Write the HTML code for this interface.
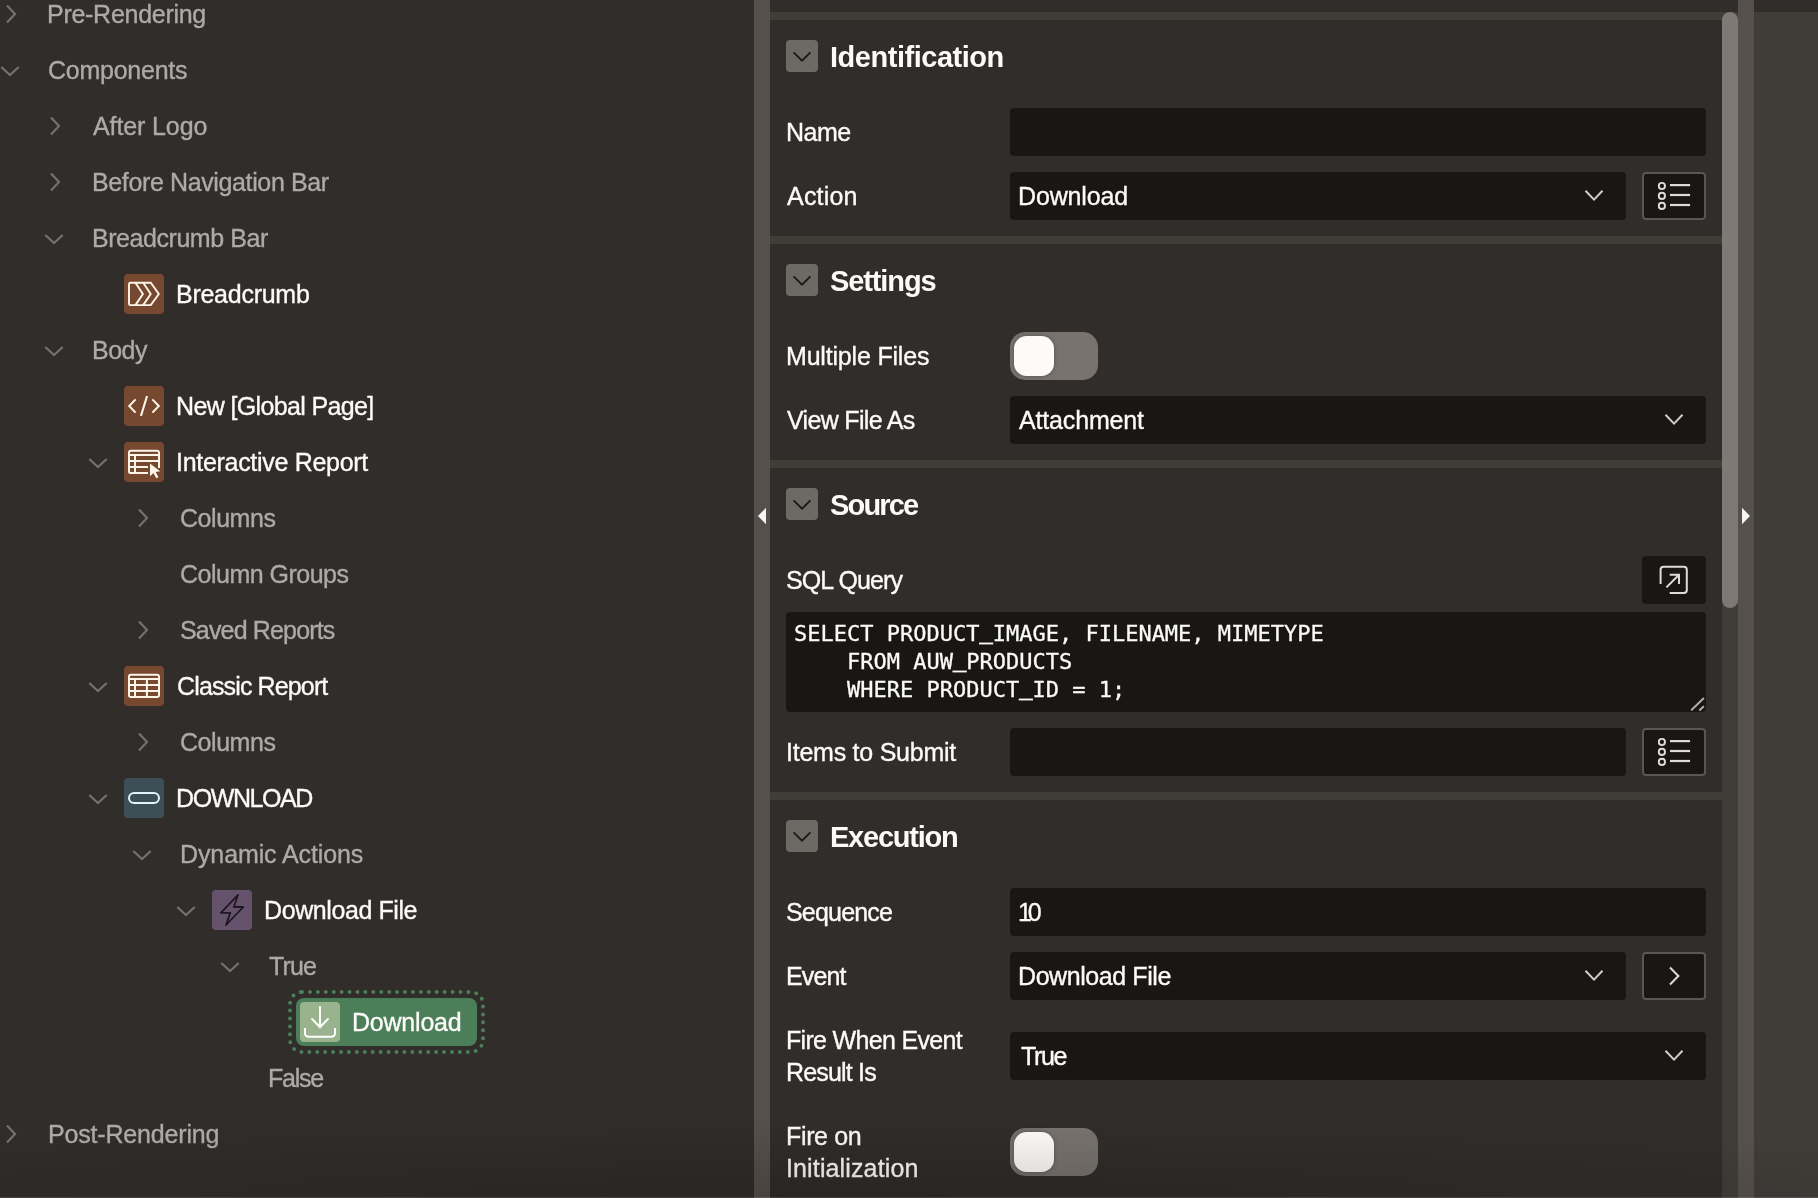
<!DOCTYPE html>
<html lang="en"><head><meta charset="utf-8"><title>Page Designer</title>
<style>
html,body{margin:0;padding:0;background:#312d2a;}
body{width:1818px;height:1198px;overflow:hidden;position:relative;font-family:"Liberation Sans",sans-serif;}
.abs{position:absolute;}
span.abs,pre.abs{will-change:transform;}
.t{font-size:25px;line-height:32px;white-space:nowrap;-webkit-text-stroke:0.35px currentColor;}
.h{font-size:29px;line-height:40px;font-weight:bold;color:#fcfbfa;white-space:nowrap;}
.u{position:relative;top:-1.6px;-webkit-text-stroke:0.9px currentColor;}
.m{margin:0;font-family:"DejaVu Sans Mono","Liberation Mono",monospace;font-size:22px;line-height:28px;color:#fcfbfa;-webkit-text-stroke:0.3px currentColor;}
</style></head><body>
<div class="abs" style="left:0;top:0;width:754px;height:1198px;background:#312d2a"></div>
<svg class="abs" style="left:-0.85px;top:1.85px" width="24" height="24" viewBox="0 0 24 24"><path d="M8 3.5 L16 12 L8 20.5" fill="none" stroke="#75716d" stroke-width="2.2"/></svg>
<span id="tree0" class="abs t" style="left:47px;top:-2px;color:#adaaa7;letter-spacing:-0.279px">Pre-Rendering</span>
<svg class="abs" style="left:-2.5px;top:58.9px" width="24" height="24" viewBox="0 0 24 24"><path d="M3.3 8 L12 16 L20.7 8" fill="none" stroke="#75716d" stroke-width="2.2"/></svg>
<span id="tree1" class="abs t" style="left:48px;top:54px;color:#adaaa7;letter-spacing:-0.244px">Components</span>
<svg class="abs" style="left:43.15px;top:113.85px" width="24" height="24" viewBox="0 0 24 24"><path d="M8 3.5 L16 12 L8 20.5" fill="none" stroke="#75716d" stroke-width="2.2"/></svg>
<span id="tree2" class="abs t" style="left:93px;top:110px;color:#adaaa7;letter-spacing:-0.112px">After Logo</span>
<svg class="abs" style="left:43.15px;top:169.85px" width="24" height="24" viewBox="0 0 24 24"><path d="M8 3.5 L16 12 L8 20.5" fill="none" stroke="#75716d" stroke-width="2.2"/></svg>
<span id="tree3" class="abs t" style="left:92px;top:166px;color:#adaaa7;letter-spacing:-0.371px">Before Navigation Bar</span>
<svg class="abs" style="left:41.5px;top:226.9px" width="24" height="24" viewBox="0 0 24 24"><path d="M3.3 8 L12 16 L20.7 8" fill="none" stroke="#75716d" stroke-width="2.2"/></svg>
<span id="tree4" class="abs t" style="left:92px;top:222px;color:#adaaa7;letter-spacing:-0.446px">Breadcrumb Bar</span>
<svg class="abs" style="left:124px;top:274px" width="40" height="40" viewBox="0 0 40 40"><rect width="40" height="40" rx="4" fill="#764830"/><path d="M6.5 8.75 H26.8 L34.8 20 L26.8 31.15 H6.5 a1.5 1.5 0 0 1 -1.5 -1.5 V10.25 a1.5 1.5 0 0 1 1.5 -1.5 Z M11.4 8.75 L18.9 20 L11.4 31.15 M19.2 8.75 L26.7 20 L19.2 31.15" fill="none" stroke="#fdf6e8" stroke-width="1.9" stroke-linejoin="miter"/></svg>
<span id="tree5" class="abs t" style="left:176px;top:278px;color:#fcfbfa;letter-spacing:-0.26px">Breadcrumb</span>
<svg class="abs" style="left:41.5px;top:338.9px" width="24" height="24" viewBox="0 0 24 24"><path d="M3.3 8 L12 16 L20.7 8" fill="none" stroke="#75716d" stroke-width="2.2"/></svg>
<span id="tree6" class="abs t" style="left:92px;top:334px;color:#adaaa7;letter-spacing:-0.523px">Body</span>
<svg class="abs" style="left:124px;top:386px" width="40" height="40" viewBox="0 0 40 40"><rect width="40" height="40" rx="4" fill="#764830"/><path d="M11.6 13.4 L5.2 20 L11.6 26.6 M28.4 13.4 L34.8 20 L28.4 26.6" fill="none" stroke="#fdf6e8" stroke-width="2"/><path d="M23.05 10 L16.95 30" fill="none" stroke="#fdf6e8" stroke-width="2.1"/></svg>
<span id="tree7" class="abs t" style="left:176px;top:390px;color:#fcfbfa;letter-spacing:-0.633px">New [Global Page]</span>
<svg class="abs" style="left:85.5px;top:450.9px" width="24" height="24" viewBox="0 0 24 24"><path d="M3.3 8 L12 16 L20.7 8" fill="none" stroke="#75716d" stroke-width="2.2"/></svg>
<svg class="abs" style="left:124px;top:442px" width="40" height="40" viewBox="0 0 40 40"><rect width="40" height="40" rx="4" fill="#764830"/><path d="M24 31.1 H6.8 a1.8 1.8 0 0 1 -1.8 -1.8 V10.55 a1.8 1.8 0 0 1 1.8 -1.8 H33.2 a1.8 1.8 0 0 1 1.8 1.8 V26 M5 13 H35 M5 18.9 H35 M5 25 H24 M11 13 V31.1" fill="none" stroke="#fdf6e8" stroke-width="2"/><path d="M26 21.6 L26 34.2 L29.4 30.9 L32.3 36.3 L34.5 35.2 L31.7 30 L36.2 29.2 Z" fill="#fdf6e8"/></svg>
<span id="tree8" class="abs t" style="left:176px;top:446px;color:#fcfbfa;letter-spacing:-0.298px">Interactive Report</span>
<svg class="abs" style="left:131.15px;top:505.85px" width="24" height="24" viewBox="0 0 24 24"><path d="M8 3.5 L16 12 L8 20.5" fill="none" stroke="#75716d" stroke-width="2.2"/></svg>
<span id="tree9" class="abs t" style="left:180px;top:502px;color:#adaaa7;letter-spacing:-0.456px">Columns</span>
<span id="tree10" class="abs t" style="left:180px;top:558px;color:#adaaa7;letter-spacing:-0.507px">Column Groups</span>
<svg class="abs" style="left:131.15px;top:617.85px" width="24" height="24" viewBox="0 0 24 24"><path d="M8 3.5 L16 12 L8 20.5" fill="none" stroke="#75716d" stroke-width="2.2"/></svg>
<span id="tree11" class="abs t" style="left:180px;top:614px;color:#adaaa7;letter-spacing:-0.838px">Saved Reports</span>
<svg class="abs" style="left:85.5px;top:674.9px" width="24" height="24" viewBox="0 0 24 24"><path d="M3.3 8 L12 16 L20.7 8" fill="none" stroke="#75716d" stroke-width="2.2"/></svg>
<svg class="abs" style="left:124px;top:666px" width="40" height="40" viewBox="0 0 40 40"><rect width="40" height="40" rx="4" fill="#764830"/><path d="M6.8 8.75 H33.2 a1.8 1.8 0 0 1 1.8 1.8 V29.3 a1.8 1.8 0 0 1 -1.8 1.8 H6.8 a1.8 1.8 0 0 1 -1.8 -1.8 V10.55 a1.8 1.8 0 0 1 1.8 -1.8 Z M5 13 H35 M5 18.9 H35 M5 25 H35 M11 13 V31.1 M22.9 13 V31.1" fill="none" stroke="#fdf6e8" stroke-width="2"/></svg>
<span id="tree12" class="abs t" style="left:177px;top:670px;color:#fcfbfa;letter-spacing:-0.865px">Classic Report</span>
<svg class="abs" style="left:131.15px;top:729.85px" width="24" height="24" viewBox="0 0 24 24"><path d="M8 3.5 L16 12 L8 20.5" fill="none" stroke="#75716d" stroke-width="2.2"/></svg>
<span id="tree13" class="abs t" style="left:180px;top:726px;color:#adaaa7;letter-spacing:-0.456px">Columns</span>
<svg class="abs" style="left:85.5px;top:786.9px" width="24" height="24" viewBox="0 0 24 24"><path d="M3.3 8 L12 16 L20.7 8" fill="none" stroke="#75716d" stroke-width="2.2"/></svg>
<svg class="abs" style="left:124px;top:778px" width="40" height="40" viewBox="0 0 40 40"><rect width="40" height="40" rx="4" fill="#3c4f56"/><rect x="5" y="14.9" width="30" height="10.2" rx="5.1" fill="none" stroke="#e4f3fa" stroke-width="2"/></svg>
<span id="tree14" class="abs t" style="left:176px;top:782px;color:#fcfbfa;letter-spacing:-1.404px">DOWNLOAD</span>
<svg class="abs" style="left:129.5px;top:842.9px" width="24" height="24" viewBox="0 0 24 24"><path d="M3.3 8 L12 16 L20.7 8" fill="none" stroke="#75716d" stroke-width="2.2"/></svg>
<span id="tree15" class="abs t" style="left:180px;top:838px;color:#adaaa7;letter-spacing:-0.103px">Dynamic Actions</span>
<svg class="abs" style="left:173.5px;top:898.9px" width="24" height="24" viewBox="0 0 24 24"><path d="M3.3 8 L12 16 L20.7 8" fill="none" stroke="#75716d" stroke-width="2.2"/></svg>
<svg class="abs" style="left:212px;top:890px" width="40" height="40" viewBox="0 0 40 40"><rect width="40" height="40" rx="4" fill="#65526d"/><path d="M26 4.8 L8.8 22.8 H18.3 L14 35 L31.3 17 H21.8 Z" fill="none" stroke="#1d181f" stroke-width="1.8" stroke-linejoin="round"/></svg>
<span id="tree16" class="abs t" style="left:264px;top:894px;color:#fcfbfa;letter-spacing:-0.407px">Download File</span>
<svg class="abs" style="left:217.5px;top:954.9px" width="24" height="24" viewBox="0 0 24 24"><path d="M3.3 8 L12 16 L20.7 8" fill="none" stroke="#75716d" stroke-width="2.2"/></svg>
<span id="tree17" class="abs t" style="left:269px;top:950px;color:#adaaa7;letter-spacing:-0.861px">True</span>
<div class="abs" style="left:288px;top:990px;width:189px;height:56px;border:4px dotted #4b7e59;border-radius:14px;"></div>
<div class="abs" style="left:296px;top:998px;width:181px;height:48px;background:#4b7e59;border-radius:8px;"></div>
<svg class="abs" style="left:300px;top:1002px" width="40" height="40" viewBox="0 0 40 40"><rect width="40" height="40" rx="4" fill="#98b38d"/><path d="M20 4.3 V25 M11.5 16.4 L20 25.2 L28.5 16.4" fill="none" stroke="#ffffff" stroke-width="2"/><path d="M5 26 V31.3 a3.5 3.5 0 0 0 3.5 3.5 H31.5 a3.5 3.5 0 0 0 3.5 -3.5 V26" fill="none" stroke="#ffffff" stroke-width="2"/></svg>
<span id="tree18" class="abs t" style="left:352px;top:1006px;color:#fcfbfa;letter-spacing:-0.217px">Download</span>
<span id="tree19" class="abs t" style="left:268px;top:1062px;color:#adaaa7;letter-spacing:-1.258px">False</span>
<svg class="abs" style="left:-0.85px;top:1121.85px" width="24" height="24" viewBox="0 0 24 24"><path d="M8 3.5 L16 12 L8 20.5" fill="none" stroke="#75716d" stroke-width="2.2"/></svg>
<span id="tree20" class="abs t" style="left:48px;top:1118px;color:#adaaa7;letter-spacing:-0.172px">Post-Rendering</span>
<div class="abs" style="left:754px;top:0;width:16px;height:1198px;background:#56504c"></div>
<svg class="abs" style="left:754px;top:504px" width="16" height="24" viewBox="0 0 16 24"><path d="M12 3.8 L4 12 L12 20.2 Z" fill="#f7f5f3"/></svg>
<div class="abs" style="left:770px;top:0;width:952px;height:1198px;background:#312d2a"></div>
<div class="abs" style="left:770px;top:12px;width:952px;height:8px;background:#403c38"></div>
<div class="abs" style="left:786px;top:40px;width:32px;height:32px;border-radius:4px;background:#6d6964"></div>
<svg class="abs" style="left:786px;top:40px" width="32" height="32" viewBox="0 0 32 32"><path d="M7.6 12.4 L16 20.7 L24.4 12.4" fill="none" stroke="#1c1a18" stroke-width="1.9"/></svg>
<span id="h0" class="abs h" style="left:830px;top:37px;letter-spacing:-0.472px">Identification</span>
<span id="l0" class="abs t" style="left:786px;top:116px;color:#fcfbfa;letter-spacing:-0.481px">Name</span>
<div class="abs" style="left:1010px;top:108px;width:696px;height:48px;background:#191715;border-radius:4px"></div>
<span id="l1" class="abs t" style="left:787px;top:180px;color:#fcfbfa;letter-spacing:0.204px">Action</span>
<div class="abs" style="left:1010px;top:172px;width:616px;height:48px;background:#191715;border-radius:4px"></div>
<span id="v1" class="abs t" style="left:1018px;top:180px;color:#fcfbfa;letter-spacing:-0.144px">Download</span>
<svg class="abs" style="left:1582px;top:184px" width="24" height="24" viewBox="0 0 24 24"><path d="M3.5 6.8 L12 15.6 L20.5 6.8" fill="none" stroke="#d2cfcc" stroke-width="2"/></svg>
<div class="abs" style="left:1642px;top:172px;width:64px;height:48px;background:#191715;border-radius:4px;box-sizing:border-box;border:2px solid #5a5652;"></div>
<svg class="abs" style="left:1642px;top:172px" width="64" height="48" viewBox="0 0 64 48"><circle cx="19.9" cy="14" r="3.1" fill="none" stroke="#dedbd8" stroke-width="1.9"/><path d="M28 13.1 H48.1" stroke="#dedbd8" stroke-width="2.2"/><circle cx="19.9" cy="23.9" r="3.1" fill="none" stroke="#dedbd8" stroke-width="1.9"/><path d="M28 23.0 H48.1" stroke="#dedbd8" stroke-width="2.2"/><circle cx="19.9" cy="33.9" r="3.1" fill="none" stroke="#dedbd8" stroke-width="1.9"/><path d="M28 33.0 H48.1" stroke="#dedbd8" stroke-width="2.2"/></svg>
<div class="abs" style="left:770px;top:236px;width:952px;height:8px;background:#403c38"></div>
<div class="abs" style="left:786px;top:264px;width:32px;height:32px;border-radius:4px;background:#6d6964"></div>
<svg class="abs" style="left:786px;top:264px" width="32" height="32" viewBox="0 0 32 32"><path d="M7.6 12.4 L16 20.7 L24.4 12.4" fill="none" stroke="#1c1a18" stroke-width="1.9"/></svg>
<span id="h1" class="abs h" style="left:830px;top:261px;letter-spacing:-1.103px">Settings</span>
<span id="l2" class="abs t" style="left:786px;top:340px;color:#fcfbfa;letter-spacing:-0.19px">Multiple Files</span>
<div class="abs" style="left:1010px;top:332px;width:88px;height:48px;background:#78736f;border-radius:15px"></div>
<div class="abs" style="left:1014px;top:336px;width:40px;height:40px;background:#fcfbfa;border-radius:12.5px;box-shadow:0 0 5px rgba(0,0,0,0.28)"></div>
<span id="l3" class="abs t" style="left:787px;top:404px;color:#fcfbfa;letter-spacing:-0.671px">View File As</span>
<div class="abs" style="left:1010px;top:396px;width:696px;height:48px;background:#191715;border-radius:4px"></div>
<span id="v3" class="abs t" style="left:1019px;top:404px;color:#fcfbfa;letter-spacing:-0.159px">Attachment</span>
<svg class="abs" style="left:1662px;top:408px" width="24" height="24" viewBox="0 0 24 24"><path d="M3.5 6.8 L12 15.6 L20.5 6.8" fill="none" stroke="#d2cfcc" stroke-width="2"/></svg>
<div class="abs" style="left:770px;top:460px;width:952px;height:8px;background:#403c38"></div>
<div class="abs" style="left:786px;top:488px;width:32px;height:32px;border-radius:4px;background:#6d6964"></div>
<svg class="abs" style="left:786px;top:488px" width="32" height="32" viewBox="0 0 32 32"><path d="M7.6 12.4 L16 20.7 L24.4 12.4" fill="none" stroke="#1c1a18" stroke-width="1.9"/></svg>
<span id="h2" class="abs h" style="left:830px;top:485px;letter-spacing:-1.833px">Source</span>
<span id="l4" class="abs t" style="left:786px;top:564px;color:#fcfbfa;letter-spacing:-0.891px">SQL Query</span>
<div class="abs" style="left:1642px;top:556px;width:64px;height:48px;background:#191715;border-radius:4px;box-sizing:border-box;"></div>
<svg class="abs" style="left:1642px;top:556px" width="64" height="48" viewBox="0 0 64 48"><path d="M18.6 28 V13.8 a3 3 0 0 1 3 -3 H41.8 a3 3 0 0 1 3 3 V34.1 a3 3 0 0 1 -3 3 H27.7" fill="none" stroke="#dedbd8" stroke-width="2"/><path d="M24.4 31.4 L37 18.8 M27.7 18.8 H37 V28" fill="none" stroke="#dedbd8" stroke-width="2"/></svg>
<div class="abs" style="left:786px;top:612px;width:920px;height:100px;background:#191715;border-radius:4px"></div>
<pre class="abs m" style="left:794px;top:620px;">SELECT PRODUCT<span class="u">_</span>IMAGE, FILENAME, MIMETYPE
    FROM AUW<span class="u">_</span>PRODUCTS
    WHERE PRODUCT<span class="u">_</span>ID = 1;</pre>
<svg class="abs" style="left:1686px;top:692px" width="20" height="20" viewBox="0 0 20 20"><path d="M5.2 18.3 L17.9 6 M13.3 18.5 L17.9 14.2" stroke="#b3b0ad" stroke-width="1.9" fill="none"/></svg>
<span id="l5" class="abs t" style="left:786px;top:736px;color:#fcfbfa;letter-spacing:-0.243px">Items to Submit</span>
<div class="abs" style="left:1010px;top:728px;width:616px;height:48px;background:#191715;border-radius:4px"></div>
<div class="abs" style="left:1642px;top:728px;width:64px;height:48px;background:#191715;border-radius:4px;box-sizing:border-box;border:2px solid #5a5652;"></div>
<svg class="abs" style="left:1642px;top:728px" width="64" height="48" viewBox="0 0 64 48"><circle cx="19.9" cy="14" r="3.1" fill="none" stroke="#dedbd8" stroke-width="1.9"/><path d="M28 13.1 H48.1" stroke="#dedbd8" stroke-width="2.2"/><circle cx="19.9" cy="23.9" r="3.1" fill="none" stroke="#dedbd8" stroke-width="1.9"/><path d="M28 23.0 H48.1" stroke="#dedbd8" stroke-width="2.2"/><circle cx="19.9" cy="33.9" r="3.1" fill="none" stroke="#dedbd8" stroke-width="1.9"/><path d="M28 33.0 H48.1" stroke="#dedbd8" stroke-width="2.2"/></svg>
<div class="abs" style="left:770px;top:792px;width:952px;height:8px;background:#403c38"></div>
<div class="abs" style="left:786px;top:820px;width:32px;height:32px;border-radius:4px;background:#6d6964"></div>
<svg class="abs" style="left:786px;top:820px" width="32" height="32" viewBox="0 0 32 32"><path d="M7.6 12.4 L16 20.7 L24.4 12.4" fill="none" stroke="#1c1a18" stroke-width="1.9"/></svg>
<span id="h3" class="abs h" style="left:830px;top:817px;letter-spacing:-1.236px">Execution</span>
<span id="l6" class="abs t" style="left:786px;top:896px;color:#fcfbfa;letter-spacing:-0.807px">Sequence</span>
<div class="abs" style="left:1010px;top:888px;width:696px;height:48px;background:#191715;border-radius:4px"></div>
<span id="v6" class="abs t" style="left:1018px;top:896px;color:#fcfbfa;letter-spacing:-4.079px">10</span>
<span id="l7" class="abs t" style="left:786px;top:960px;color:#fcfbfa;letter-spacing:-0.864px">Event</span>
<div class="abs" style="left:1010px;top:952px;width:616px;height:48px;background:#191715;border-radius:4px"></div>
<span id="v7" class="abs t" style="left:1018px;top:960px;color:#fcfbfa;letter-spacing:-0.423px">Download File</span>
<svg class="abs" style="left:1582px;top:964px" width="24" height="24" viewBox="0 0 24 24"><path d="M3.5 6.8 L12 15.6 L20.5 6.8" fill="none" stroke="#d2cfcc" stroke-width="2"/></svg>
<div class="abs" style="left:1642px;top:952px;width:64px;height:48px;background:#191715;border-radius:4px;box-sizing:border-box;border:2px solid #5a5652;"></div>
<svg class="abs" style="left:1642px;top:952px" width="64" height="48" viewBox="0 0 64 48"><path d="M28 15.5 L36.4 24 L28 32.5" fill="none" stroke="#dedbd8" stroke-width="2"/></svg>
<span id="l8" class="abs t" style="left:786px;top:1024px;color:#fcfbfa;letter-spacing:-0.683px">Fire When Event</span>
<span id="l9" class="abs t" style="left:786px;top:1056px;color:#fcfbfa;letter-spacing:-0.813px">Result Is</span>
<div class="abs" style="left:1010px;top:1032px;width:696px;height:48px;background:#191715;border-radius:4px"></div>
<span id="v8" class="abs t" style="left:1021px;top:1040px;color:#fcfbfa;letter-spacing:-1.358px">True</span>
<svg class="abs" style="left:1662px;top:1044px" width="24" height="24" viewBox="0 0 24 24"><path d="M3.5 6.8 L12 15.6 L20.5 6.8" fill="none" stroke="#d2cfcc" stroke-width="2"/></svg>
<span id="l10" class="abs t" style="left:786px;top:1120px;color:#fcfbfa;letter-spacing:-0.35px">Fire on</span>
<span id="l11" class="abs t" style="left:786px;top:1152px;color:#fcfbfa;letter-spacing:0.134px">Initialization</span>
<div class="abs" style="left:1010px;top:1128px;width:88px;height:48px;background:#78736f;border-radius:15px"></div>
<div class="abs" style="left:1014px;top:1132px;width:40px;height:40px;background:#fcfbfa;border-radius:12.5px;box-shadow:0 0 5px rgba(0,0,0,0.28)"></div>
<div class="abs" style="left:1722px;top:12px;width:16px;height:1186px;background:#403c38"></div>
<div class="abs" style="left:1722px;top:12px;width:16px;height:596px;background:#7e7975;border-radius:8px"></div>
<div class="abs" style="left:1738px;top:0;width:16px;height:1198px;background:#56504c"></div>
<svg class="abs" style="left:1738px;top:504px" width="16" height="24" viewBox="0 0 16 24"><path d="M4 3.8 L12 12 L4 20.2 Z" fill="#f7f5f3"/></svg>
<div class="abs" style="left:1754px;top:0;width:64px;height:12px;background:#312d2a"></div>
<div class="abs" style="left:1754px;top:12px;width:64px;height:1186px;background:#403c38"></div>
<div class="abs" style="left:0;top:1118px;width:1818px;height:80px;background:radial-gradient(ellipse 1350px 76px at 47% 100%,rgba(0,0,0,0.17),rgba(0,0,0,0.09) 45%,rgba(0,0,0,0) 100%)"></div>
<div class="abs" style="left:0;top:1197px;width:1818px;height:1px;background:rgba(255,255,255,0.13)"></div>
</body></html>
